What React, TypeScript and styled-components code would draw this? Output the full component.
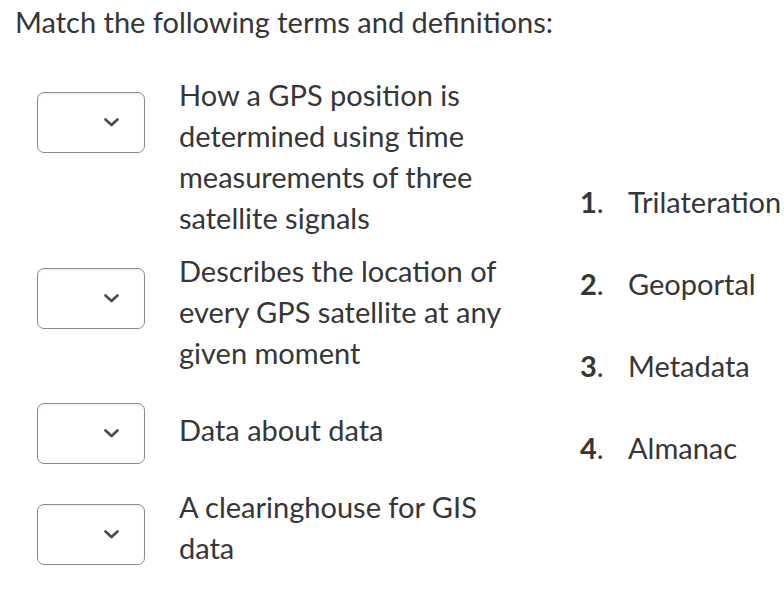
import React from 'react';
import styled, { createGlobalStyle } from 'styled-components';

const GlobalStyle = createGlobalStyle`
  html, body {
    margin: 0;
    padding: 0;
    background: #ffffff;
  }
  body {
    font-family: Lato, "Noto Sans", sans-serif;
    color: #363636;
  }
`;

const Page = styled.div`
  width: 784px;
  height: 591px;
  padding: 3px 0 0 15px;
  box-sizing: border-box;
  overflow: hidden;
`;

const Prompt = styled.p`
  margin: 0;
  padding-top: 1px;
  font-size: 29px;
  line-height: 36px;
  font-weight: 400;
`;

const Body = styled.div`
  display: grid;
  grid-template-columns: 565px 1fr;
  align-items: center;
  margin-top: 34px;
`;

const Terms = styled.div`
  display: flex;
  flex-direction: column;
  gap: 12px;
`;

const TermRow = styled.div`
  display: flex;
  align-items: flex-start;
  gap: 34px;
  padding-left: 22px;
`;

const SelectBox = styled.div`
  flex: none;
  width: 108px;
  height: 61px;
  margin: 18px 0 10px;
  box-sizing: border-box;
  border: 1px solid #8b8b8b;
  border-radius: 7px;
  background: #fff;
  box-shadow: inset 0 2px 2px rgba(0, 0, 0, 0.05);
  display: flex;
  align-items: center;
  justify-content: flex-end;
  padding-right: 25px;
  color: #4a4a4a;
`;

const Definition = styled.div<{ $single?: boolean }>`
  width: 340px;
  font-size: 29px;
  line-height: 41px;
  align-self: ${(p) => (p.$single ? 'center' : 'flex-start')};
`;

const Answers = styled.ol`
  list-style: none;
  margin: 0;
  padding: 0;
  display: flex;
  flex-direction: column;
  gap: 40.7px;
`;

const Answer = styled.li`
  display: flex;
  font-size: 29px;
  line-height: 41px;
  white-space: nowrap;
`;

const Num = styled.span`
  width: 48px;
  flex: none;
  b {
    font-weight: 700;
  }
`;

const Chevron = () => (
  <svg width="15" height="9" viewBox="0 0 15 9" fill="none">
    <path d="M1.5 1.5 L7.5 7 L13.5 1.5" stroke="currentColor" strokeWidth="2.6" strokeLinecap="round" strokeLinejoin="round" />
  </svg>
);

const terms = [
  { text: 'How a GPS position is determined using time measurements of three satellite signals' },
  { text: 'Describes the location of every GPS satellite at any given moment' },
  { text: 'Data about data', single: true },
  { text: 'A clearinghouse for GIS data' },
];

const answers = ['Trilateration', 'Geoportal', 'Metadata', 'Almanac'];

export default function App() {
  return (
    <Page>
      <GlobalStyle />
      <Prompt>Match the following terms and definitions:</Prompt>
      <Body>
        <Terms>
          {terms.map((t, i) => (
            <TermRow key={i}>
              <SelectBox>
                <Chevron />
              </SelectBox>
              <Definition $single={t.single}>{t.text}</Definition>
            </TermRow>
          ))}
        </Terms>
        <Answers>
          {answers.map((a, i) => (
            <Answer key={a}>
              <Num>
                <b>{i + 1}</b>.
              </Num>
              {a}
            </Answer>
          ))}
        </Answers>
      </Body>
    </Page>
  );
}
